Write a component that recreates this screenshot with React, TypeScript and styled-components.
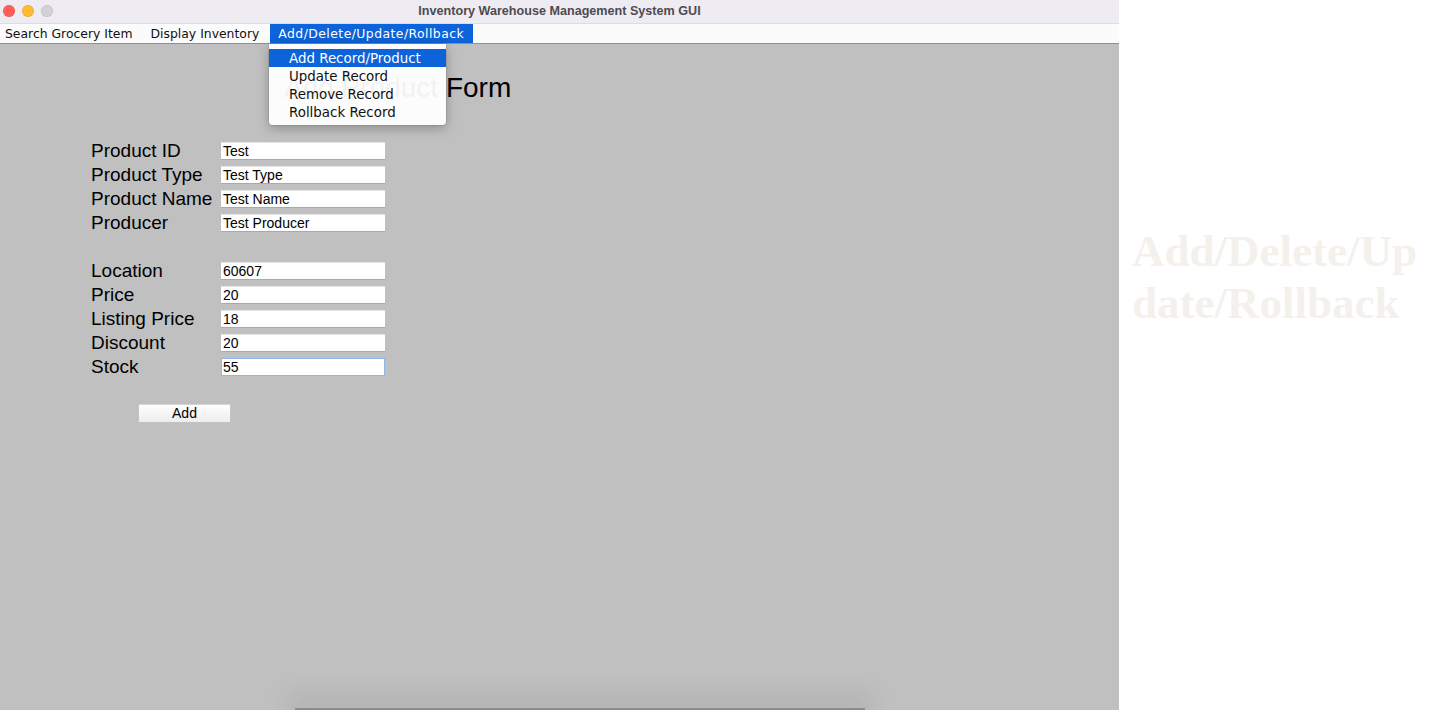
import React from "react";
import styled, { createGlobalStyle, css } from "styled-components";

const GlobalStyle = createGlobalStyle`
  html, body {
    margin: 0;
    padding: 0;
    height: 100%;
    overflow: hidden;
  }
  #root {
    height: 100%;
  }
`;

const Screen = styled.div`
  display: flex;
  height: 710px;
  width: 1448px;
`;

const Window = styled.div`
  position: relative;
  width: 1119px;
  display: flex;
  flex-direction: column;
  flex-shrink: 0;
`;

const TitleBar = styled.div`
  position: relative;
  height: 24px;
  box-sizing: border-box;
  border-bottom: 1px solid #dedbe2;
  background: #efebf2;
  display: flex;
  align-items: center;
  justify-content: center;
`;

const Lights = styled.div`
  position: absolute;
  left: 3px;
  top: 5px;
  display: flex;
  gap: 7px;
`;

const Light = styled.span<{ $color: string }>`
  width: 12px;
  height: 12px;
  border-radius: 50%;
  background: ${(p) => p.$color};
  box-shadow: inset 0 0 0 0.5px rgba(0, 0, 0, 0.12);
`;

const WindowTitle = styled.div`
  font-family: "Liberation Sans", Arial, sans-serif;
  font-weight: bold;
  font-size: 12.6px;
  color: #4d4b50;
  margin-top: -2px;
`;

const MenuBar = styled.div`
  height: 19px;
  background: #fbfbfb;
  border-bottom: 1px solid #8f8f8f;
  display: flex;
  padding-left: 5px;
  font-family: "DejaVu Sans", sans-serif;
  font-size: 12.4px;
  line-height: 20px;
  color: #111;
`;

const MenuItem = styled.div<{
  $active?: boolean;
  $padLeft?: number;
  $padRight?: number;
  $spacing?: number;
}>`
  padding: 0 ${(p) => p.$padRight ?? 9}px 0 ${(p) => p.$padLeft ?? 9}px;
  letter-spacing: ${(p) => p.$spacing ?? 0}px;
  white-space: nowrap;
  ${(p) =>
    p.$active &&
    css`
      background: #0d63d9;
      color: #fff;
    `}
`;

const Dropdown = styled.div`
  position: absolute;
  left: 269px;
  top: 44px;
  width: 177px;
  padding: 5px 0 4px;
  background: rgba(255, 255, 255, 0.95);
  border-radius: 0 0 4px 4px;
  box-shadow: 0 3px 12px rgba(0, 0, 0, 0.28), 0 0 0 0.5px rgba(0, 0, 0, 0.15);
  font-family: "DejaVu Sans", sans-serif;
  font-size: 13.4px;
  color: #111;
  z-index: 5;
`;

const DropItem = styled.div<{ $active?: boolean }>`
  height: 18px;
  line-height: 19px;
  padding-left: 20px;
  white-space: nowrap;
  ${(p) =>
    p.$active &&
    css`
      background: #0d63d9;
      color: #fff;
    `}
`;

const Content = styled.div`
  position: relative;
  flex: 1;
  background: #c0c0c0;
  display: flex;
  flex-direction: column;
  align-items: flex-start;
  padding: 27px 0 0 91px;
  font-family: "Liberation Sans", Arial, sans-serif;
  color: #000;
`;

const FormTitle = styled.div`
  margin-left: 193px;
  font-size: 28px;
  line-height: 34px;
`;

const FieldGrid = styled.div`
  margin-top: 34px;
  display: grid;
  grid-template-columns: 130px 164px;
  grid-auto-rows: 24px;
  align-items: center;
`;

const Label = styled.div`
  font-size: 19px;
  line-height: 24px;
  white-space: nowrap;
`;

const Field = styled.input<{ $focused?: boolean }>`
  box-sizing: border-box;
  width: 164px;
  height: 18px;
  margin: 0;
  padding: 0 0 0 2px;
  border: none;
  border-bottom: 1px solid #a9a9a9;
  border-top: 1px solid #e4e4e4;
  background: #fff;
  font-family: "Liberation Sans", Arial, sans-serif;
  font-size: 14px;
  color: #000;
  outline: none;
  caret-color: #000;
  ${(p) =>
    p.$focused &&
    css`
      border: 1px solid #8db7ea;
      padding-left: 1px;
    `}
`;

const Gap = styled.div`
  grid-column: 1 / span 2;
`;

const AddButton = styled.button`
  margin: 25px 0 0 47px;
  width: 93px;
  height: 19px;
  padding: 0;
  box-sizing: border-box;
  border: 1px solid #c4c4c4;
  border-top-color: #d6d6d6;
  border-radius: 1px;
  background: linear-gradient(#fefefe, #ededed);
  font-family: "Liberation Sans", Arial, sans-serif;
  font-size: 14px;
  line-height: 17px;
  color: #000;
`;

const Peek = styled.div`
  position: absolute;
  left: 295px;
  bottom: 0;
  width: 570px;
  height: 2px;
  background: #8b8b8d;
  box-shadow: 0 -4px 26px 8px rgba(0, 0, 0, 0.1);
`;

const SidePanel = styled.div`
  flex: 1;
  background: #fff;
  padding: 225px 14px 0 13px;
  box-sizing: border-box;
`;

const GhostHeading = styled.div`
  font-family: "Liberation Serif", "Times New Roman", serif;
  font-weight: bold;
  font-size: 45px;
  line-height: 52px;
  color: #f4f1ec;
  word-break: break-all;
`;

const fields: ({ label: string; value: string } | null)[] = [
  { label: "Product ID", value: "Test" },
  { label: "Product Type", value: "Test Type" },
  { label: "Product Name", value: "Test Name" },
  { label: "Producer", value: "Test Producer" },
  null,
  { label: "Location", value: "60607" },
  { label: "Price", value: "20" },
  { label: "Listing Price", value: "18" },
  { label: "Discount", value: "20" },
  { label: "Stock", value: "55" },
];

const menuItems = ["Add Record/Product", "Update Record", "Remove Record", "Rollback Record"];

export default function App() {
  return (
    <>
      <GlobalStyle />
      <Screen>
        <Window>
          <TitleBar>
            <Lights>
              <Light $color="#ff5f57" />
              <Light $color="#febc2e" />
              <Light $color="#d3d1d6" />
            </Lights>
            <WindowTitle>Inventory Warehouse Management System GUI</WindowTitle>
          </TitleBar>
          <MenuBar>
            <MenuItem $padLeft={0}>Search Grocery Item</MenuItem>
            <MenuItem $padRight={11}>Display Inventory</MenuItem>
            <MenuItem $active $padLeft={8} $padRight={9} $spacing={0.45}>
              Add/Delete/Update/Rollback
            </MenuItem>
          </MenuBar>
          <Content>
            <FormTitle>Add Product Form</FormTitle>
            <FieldGrid>
              {fields.map((f, i) =>
                f ? (
                  <React.Fragment key={f.label}>
                    <Label>{f.label}</Label>
                    <Field
                      defaultValue={f.value}
                      $focused={f.label === "Stock"}
                      autoFocus={f.label === "Stock"}
                    />
                  </React.Fragment>
                ) : (
                  <Gap key={"gap" + i} />
                )
              )}
            </FieldGrid>
            <AddButton type="button">Add</AddButton>
            <Peek />
          </Content>
          <Dropdown>
            {menuItems.map((m, i) => (
              <DropItem key={m} $active={i === 0}>
                {m}
              </DropItem>
            ))}
          </Dropdown>
        </Window>
        <SidePanel>
          <GhostHeading>Add/Delete/Update/Rollback</GhostHeading>
        </SidePanel>
      </Screen>
    </>
  );
}
